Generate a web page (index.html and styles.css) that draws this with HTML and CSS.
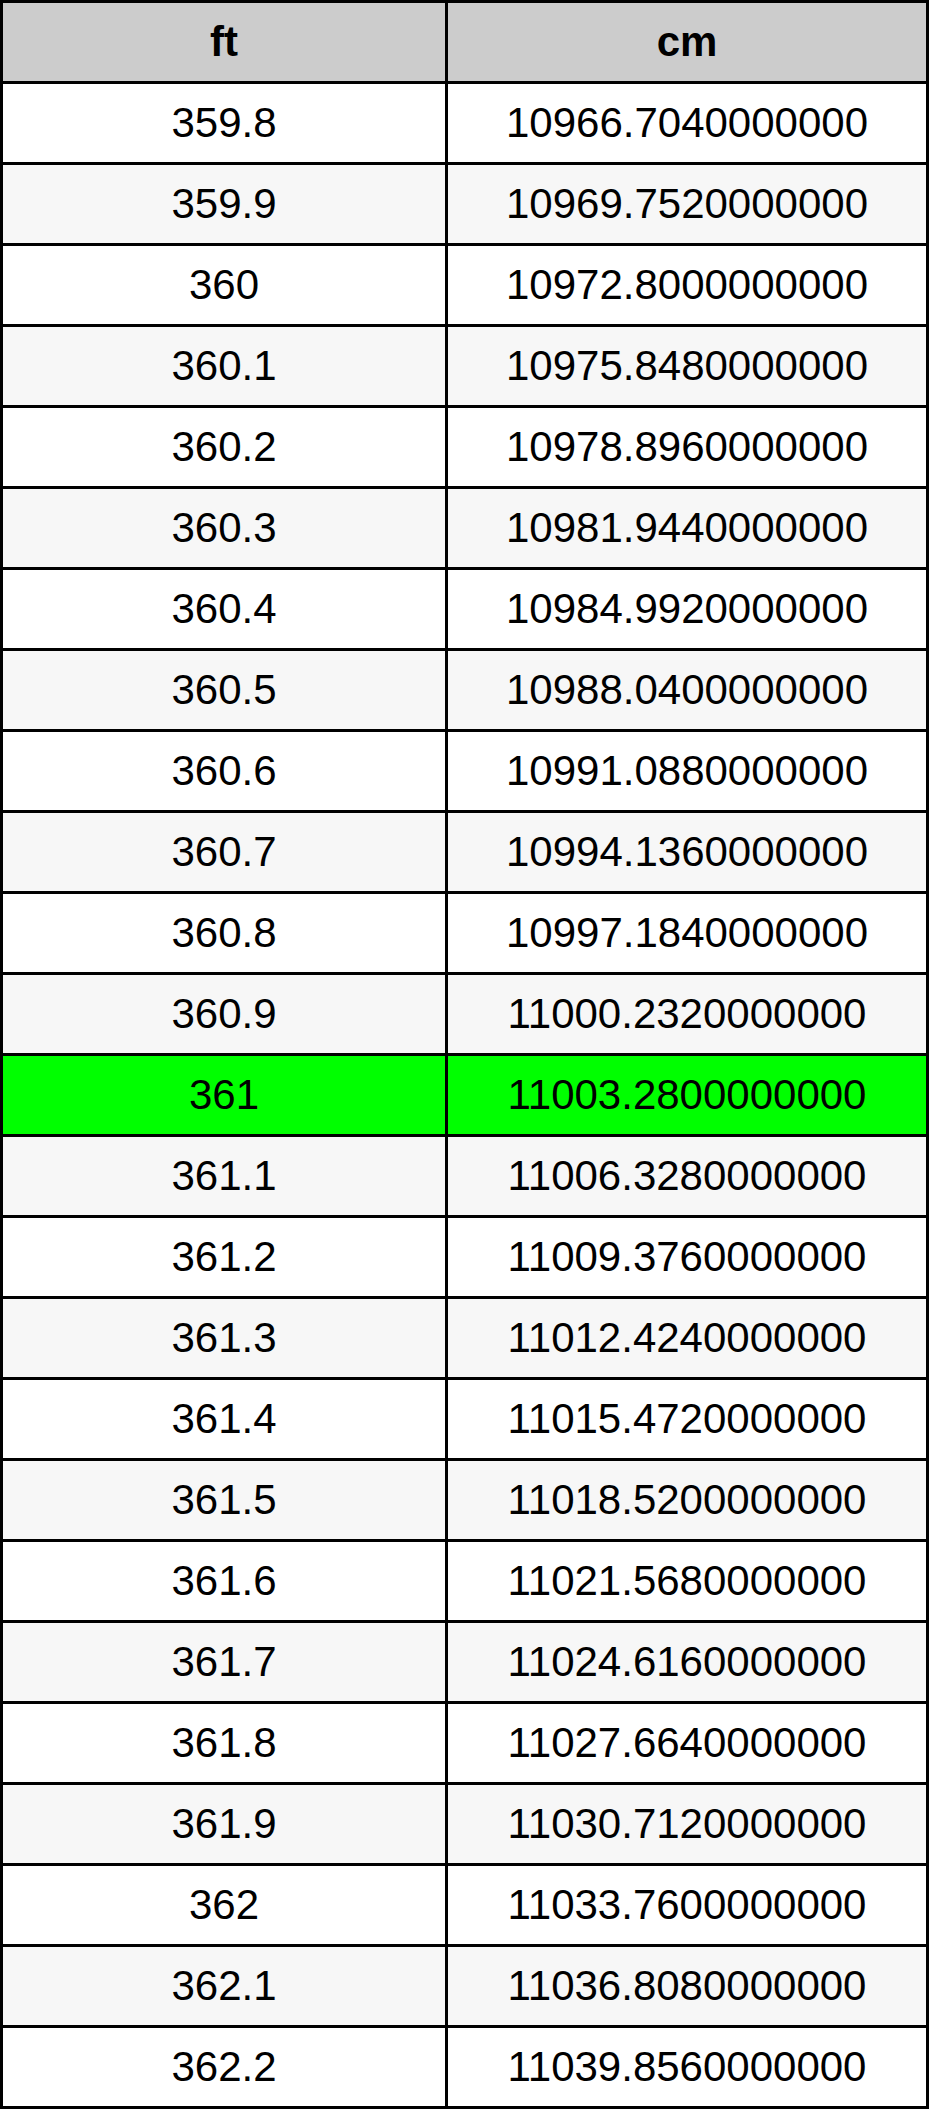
FILE: index.html
```html
<!DOCTYPE html>
<html>
<head>
<meta charset="utf-8">
<link rel="stylesheet" href="styles.css">
</head>
<body>
<div class="table">
  <div class="cell head">ft</div><div class="cell head">cm</div>
  <div class="cell">359.8</div><div class="cell">10966.7040000000</div>
  <div class="cell alt">359.9</div><div class="cell alt">10969.7520000000</div>
  <div class="cell">360</div><div class="cell">10972.8000000000</div>
  <div class="cell alt">360.1</div><div class="cell alt">10975.8480000000</div>
  <div class="cell">360.2</div><div class="cell">10978.8960000000</div>
  <div class="cell alt">360.3</div><div class="cell alt">10981.9440000000</div>
  <div class="cell">360.4</div><div class="cell">10984.9920000000</div>
  <div class="cell alt">360.5</div><div class="cell alt">10988.0400000000</div>
  <div class="cell">360.6</div><div class="cell">10991.0880000000</div>
  <div class="cell alt">360.7</div><div class="cell alt">10994.1360000000</div>
  <div class="cell">360.8</div><div class="cell">10997.1840000000</div>
  <div class="cell alt">360.9</div><div class="cell alt">11000.2320000000</div>
  <div class="cell hl">361</div><div class="cell hl">11003.2800000000</div>
  <div class="cell alt">361.1</div><div class="cell alt">11006.3280000000</div>
  <div class="cell">361.2</div><div class="cell">11009.3760000000</div>
  <div class="cell alt">361.3</div><div class="cell alt">11012.4240000000</div>
  <div class="cell">361.4</div><div class="cell">11015.4720000000</div>
  <div class="cell alt">361.5</div><div class="cell alt">11018.5200000000</div>
  <div class="cell">361.6</div><div class="cell">11021.5680000000</div>
  <div class="cell alt">361.7</div><div class="cell alt">11024.6160000000</div>
  <div class="cell">361.8</div><div class="cell">11027.6640000000</div>
  <div class="cell alt">361.9</div><div class="cell alt">11030.7120000000</div>
  <div class="cell">362</div><div class="cell">11033.7600000000</div>
  <div class="cell alt">362.1</div><div class="cell alt">11036.8080000000</div>
  <div class="cell">362.2</div><div class="cell">11039.8560000000</div>
</div>
</body>
</html>
```
FILE: styles.css
```css
html, body {
  margin: 0;
  padding: 0;
  background: #ffffff;
}
.table {
  display: grid;
  grid-template-columns: 442px 478px;
  grid-auto-rows: 78px;
  gap: 3px;
  padding: 3px;
  background: #000000;
  width: max-content;
  font-family: "Liberation Sans", Arial, sans-serif;
  font-size: 42px;
  color: #000000;
}
.cell {
  display: flex;
  align-items: center;
  justify-content: center;
  background: #ffffff;
  line-height: 1;
}
.cell.alt {
  background: #f7f7f7;
}
.cell.head {
  background: #cccccc;
  font-weight: bold;
}
.cell.hl {
  background: #00ff00;
}
```
